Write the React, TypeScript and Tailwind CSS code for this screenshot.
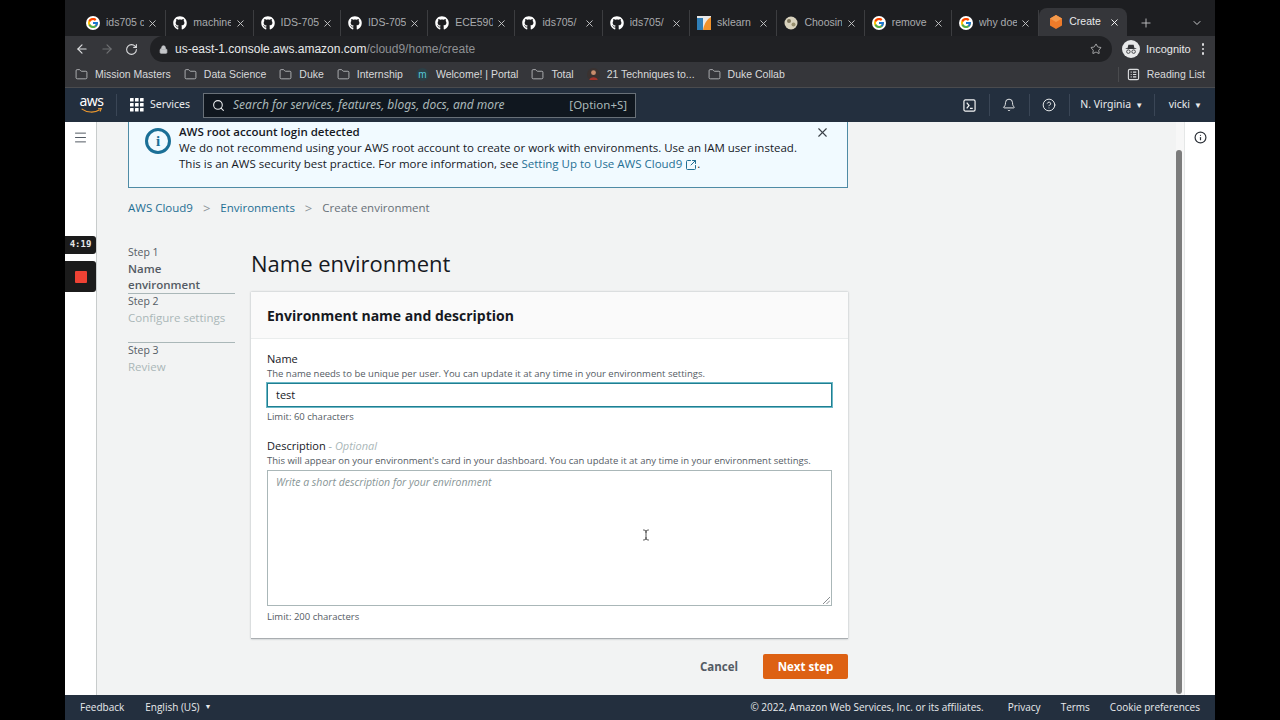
import { ArrowLeft, ArrowRight, Bell, ChevronDown, CircleHelp, Folder, Info, Lock, Menu, Plus, RotateCw, Search, SquareArrowOutUpRight, Star, TextCursor, X } from 'lucide-react'
import { FaGithub } from 'react-icons/fa'
import { FcGoogle } from 'react-icons/fc'

type TabKind = 'google' | 'github' | 'sklearn' | 'choosing' | 'aws'

const tabs: { kind: TabKind; label: string }[] = [
  { kind: 'google', label: 'ids705 c' },
  { kind: 'github', label: 'machine' },
  { kind: 'github', label: 'IDS-705' },
  { kind: 'github', label: 'IDS-705' },
  { kind: 'github', label: 'ECE590' },
  { kind: 'github', label: 'ids705/' },
  { kind: 'github', label: 'ids705/' },
  { kind: 'sklearn', label: 'sklearn' },
  { kind: 'choosing', label: 'Choosin' },
  { kind: 'google', label: 'remove' },
  { kind: 'google', label: 'why doe' },
]

const bookmarks = ['Mission Masters', 'Data Science', 'Duke', 'Internship']

function Favicon({ kind }: { kind: TabKind }) {
  if (kind === 'google') {
    return (
      <span className="flex h-[14px] w-[14px] shrink-0 items-center justify-center rounded-full bg-white">
        <FcGoogle className="h-3 w-3" />
      </span>
    )
  }
  if (kind === 'github') return <FaGithub className="h-[14px] w-[14px] shrink-0 text-white" />
  if (kind === 'sklearn') {
    return (
      <svg viewBox="0 0 14 14" className="h-[14px] w-[14px] shrink-0">
        <rect width="14" height="14" fill="#e8e8e8" />
        <path d="M0 2h6v12H0z" fill="#2f7fb8" />
        <path d="M14 1C10 3 7 8 6 14h8z" fill="#f0922b" />
      </svg>
    )
  }
  if (kind === 'choosing') {
    return (
      <svg viewBox="0 0 14 14" className="h-[14px] w-[14px] shrink-0">
        <circle cx="7" cy="7" r="6.5" fill="#d8d2bd" />
        <circle cx="5" cy="5" r="2" fill="#7d745a" />
        <circle cx="9.5" cy="8.5" r="2" fill="#98906f" />
      </svg>
    )
  }
  return (
    <svg viewBox="0 0 14 14" className="h-[14px] w-[14px] shrink-0">
      <path d="M7 0l6 3.5v7L7 14l-6-3.5v-7z" fill="#ee7b2a" />
      <path d="M7 0l6 3.5L7 7 1 3.5z" fill="#f59a4c" />
    </svg>
  )
}

function Tab({ kind, label, last }: { kind: TabKind; label: string; last: boolean }) {
  return (
    <div className="flex h-[26px] w-[87.3px] shrink-0 items-center border-r border-[#3c3d40] pl-[7px] pr-[7px]">
      <Favicon kind={kind} />
      <span className={`ml-[6px] w-[38px] overflow-hidden whitespace-nowrap text-[10.5px] text-[#a9abae] ${last ? '' : ''}`}>{label}</span>
      <X className="ml-auto h-[11px] w-[11px] text-[#c9cacc]" strokeWidth={2} />
    </div>
  )
}

function Bookmark({ label }: { label: string }) {
  return (
    <div className="flex items-center gap-[7px]">
      <Folder className="h-[13px] w-[13px] text-[#c4c6c9]" strokeWidth={1.5} />
      <span className="text-[10.5px] text-[#d9dadc]">{label}</span>
    </div>
  )
}

function ChromeBar() {
  return (
    <div className="font-['Liberation_Sans',sans-serif]">
      <div className="flex h-[36px] items-end bg-[#1d1e21] pl-[14px]">
        {tabs.map((t, i) => (
          <Tab key={i} kind={t.kind} label={t.label} last={i === tabs.length - 1} />
        ))}
        <div className="flex h-[28px] w-[88px] shrink-0 items-center rounded-t-lg bg-[#35363a] pl-[10px] pr-[7px]">
          <Favicon kind="aws" />
          <span className="ml-[6px] w-[32px] overflow-hidden whitespace-nowrap text-[10.5px] text-[#e8e9ea]">Create</span>
          <X className="ml-auto h-[11px] w-[11px] text-white" strokeWidth={2} />
        </div>
        <div className="flex h-[26px] items-center pl-[12px]">
          <Plus className="h-[14px] w-[14px] text-[#c9cacc]" strokeWidth={1.5} />
        </div>
        <div className="ml-auto flex h-[26px] items-center pr-[12px]">
          <ChevronDown className="h-[12px] w-[12px] text-[#c9cacc]" />
        </div>
      </div>
      <div className="flex h-[26px] items-center bg-[#35363a] pl-[10px] pr-[11px]">
        <ArrowLeft className="h-[14px] w-[14px] text-[#dcdddf]" strokeWidth={2} />
        <ArrowRight className="ml-[11px] h-[14px] w-[14px] text-[#6f7073]" strokeWidth={2} />
        <RotateCw className="ml-[11px] h-[13px] w-[13px] text-[#dcdddf]" strokeWidth={2} />
        <div className="ml-[12px] flex h-[26px] w-[962px] items-center rounded-full bg-[#202124] pl-[9px] pr-[10px]">
          <Lock className="h-[9px] w-[9px] fill-[#c4c6c9] text-[#c4c6c9]" />
          <span className="ml-[7px] text-[12px] text-[#e8e9ea]">
            us-east-1.console.aws.amazon.com<span className="text-[#8f9194]">/cloud9/home/create</span>
          </span>
          <Star className="ml-auto h-[12px] w-[12px] text-[#d0d1d3]" strokeWidth={1.5} />
        </div>
        <div className="ml-[10px] flex h-[22px] items-center">
          <span className="flex h-[18px] w-[18px] items-center justify-center rounded-full bg-[#e8e9ea]">
            <svg viewBox="0 0 16 16" className="h-[14px] w-[14px]">
              <path d="M5 3h6l1 4H4z M2 7h12v1H2z" fill="#35363a" />
              <circle cx="5" cy="11" r="2" fill="none" stroke="#35363a" strokeWidth="1" />
              <circle cx="11" cy="11" r="2" fill="none" stroke="#35363a" strokeWidth="1" />
            </svg>
          </span>
          <span className="ml-[6px] text-[11px] text-[#e8e9ea]">Incognito</span>
        </div>
        <div className="ml-auto flex flex-col gap-[2px]">
          <span className="h-[2.5px] w-[2.5px] rounded-full bg-[#dcdddf]" />
          <span className="h-[2.5px] w-[2.5px] rounded-full bg-[#dcdddf]" />
          <span className="h-[2.5px] w-[2.5px] rounded-full bg-[#dcdddf]" />
        </div>
      </div>
      <div className="flex h-[26px] items-center gap-[13px] border-b border-[#4a4b4e] bg-[#35363a] pl-[10px] pr-[10px]">
        {bookmarks.map(b => (
          <Bookmark key={b} label={b} />
        ))}
        <div className="flex items-center gap-[7px]">
          <span className="flex h-[13px] w-[13px] items-center justify-center rounded-full bg-[#2b3f46] text-[10px] leading-none text-[#56c5d8]">m</span>
          <span className="text-[10.5px] text-[#d9dadc]">Welcome! | Portal</span>
        </div>
        <Bookmark label="Total" />
        <div className="flex items-center gap-[7px]">
          <svg viewBox="0 0 14 14" className="h-[13px] w-[13px]">
            <circle cx="7" cy="7" r="7" fill="#3a3230" />
            <circle cx="7" cy="5" r="2.6" fill="#c98d6c" />
            <path d="M2.5 13c.5-4 8.5-4 9 0z" fill="#a3342b" />
          </svg>
          <span className="text-[10.5px] text-[#d9dadc]">21 Techniques to...</span>
        </div>
        <Bookmark label="Duke Collab" />
        <div className="ml-auto flex items-center gap-[7px] border-l border-[#4a4b4e] pl-[8px]">
          <svg viewBox="0 0 14 14" className="h-[13px] w-[13px] text-[#dcdddf]" fill="none" stroke="currentColor" strokeWidth="1.2">
            <rect x="1.5" y="1.5" width="11" height="11" rx="1.5" />
            <path d="M4 4.5h1M4 7h1M4 9.5h1M6.5 4.5H10M6.5 7H10M6.5 9.5H10" />
          </svg>
          <span className="text-[10.5px] text-[#d9dadc]">Reading List</span>
        </div>
      </div>
    </div>
  )
}

function AwsNav() {
  return (
    <div className="flex h-[34px] items-center bg-[#232f3e] pl-[14px] pr-[13px] text-[10.5px] text-[#e9ebed]">
      <div className="relative flex h-[24px] w-[25px] flex-col items-center">
        <span className="text-[14px] leading-[15px] tracking-[-0.5px] text-white">aws</span>
        <svg viewBox="0 0 25 7" className="h-[6px] w-[25px]">
          <path d="M1 1c6 4.500 15 5 21 1" fill="none" stroke="#f29b2e" strokeWidth="1.4" />
          <path d="M20 1l4-.500-1.500 3.500" fill="none" stroke="#f29b2e" strokeWidth="1.2" />
        </svg>
      </div>
      <div className="ml-[12px] mr-[13px] h-[22px] w-px bg-[#3a4656]" />
      <svg viewBox="0 0 14 14" className="h-[14px] w-[14px] fill-white">
        {[0, 5, 10].flatMap(y => [0, 5, 10].map(x => <rect key={`${x}-${y}`} x={x} y={y} width="3.6" height="3.6" rx="0.5" />))}
      </svg>
      <span className="ml-[6px]">Services</span>
      <div className="ml-[13px] flex h-[25px] w-[433px] items-center border border-[#687078] bg-[#10171f] pl-[8px] pr-[8px]">
        <Search className="h-[13px] w-[13px] text-[#e9ebed]" strokeWidth={2} />
        <span className="ml-[8px] text-[12px] italic text-[#aab7b8]">Search for services, features, blogs, docs, and more</span>
        <span className="ml-auto text-[11.5px] text-[#aab7b8]">[Option+S]</span>
      </div>
      <div className="ml-auto flex items-center">
        <span className="flex h-[22px] w-[40px] items-center justify-center border-r border-[#3a4656]">
          <svg viewBox="0 0 14 14" className="h-[13px] w-[13px]" fill="none" stroke="#f2f3f3" strokeWidth="1.3">
            <rect x="1" y="1" width="12" height="12" rx="1.500" />
            <path d="M4 4l2.500 3L4 10M7.500 10H10.500" />
          </svg>
        </span>
        <span className="flex h-[22px] w-[40px] items-center justify-center border-r border-[#3a4656]">
          <Bell className="h-[14px] w-[14px] text-[#f2f3f3]" strokeWidth={1.6} />
        </span>
        <span className="flex h-[22px] w-[40px] items-center justify-center border-r border-[#3a4656]">
          <CircleHelp className="h-[14px] w-[14px] text-[#f2f3f3]" strokeWidth={1.6} />
        </span>
        <span className="flex h-[22px] w-[85px] items-center justify-center gap-[4px] border-r border-[#3a4656]">
          N. Virginia <span className="text-[8px]">▼</span>
        </span>
        <span className="flex h-[22px] items-center gap-[4px] pl-[14px]">
          vicki <span className="text-[8px]">▼</span>
        </span>
      </div>
    </div>
  )
}

function Step({ n, label, active, line }: { n: number; label: string; active?: boolean; line?: boolean }) {
  return (
    <div className={line ? 'h-[49px] border-b border-[#aab7b8]' : 'h-[49px]'}>
      <div className="text-[10.5px] leading-[14px] text-[#545b64]">Step {n}</div>
      <div className={active ? 'mt-[2px] text-[11.5px] font-semibold leading-[16px] text-[#545b64]' : 'mt-[2px] text-[11.5px] leading-[16px] text-[#aab7b8]'}>{label}</div>
    </div>
  )
}

function Form() {
  return (
    <div className="border-b border-[#a9adb0] bg-white shadow-[0_0_2px_rgba(0,28,36,0.3)]">
      <div className="flex h-[47px] items-center border-b border-[#eaeded] bg-[#fafafa] px-4">
        <h2 className="text-[14px] font-bold text-[#16191f]">Environment name and description</h2>
      </div>
      <div className="px-4 pb-[15px] pt-[13px]">
        <div className="text-[11px] leading-[14px] text-[#16191f]">Name</div>
        <div className="mt-[1px] text-[9.5px] leading-[13px] text-[#545b64]">The name needs to be unique per user. You can update it at any time in your environment settings.</div>
        <div className="mt-[3px] flex h-[24px] items-center border border-[#1f7f92] pl-2 text-[11px] text-[#16191f] ring-1 ring-[#6db8c6]">test</div>
        <div className="mt-[3px] text-[9.5px] leading-[13px] text-[#545b64]">Limit: 60 characters</div>
        <div className="mt-[16px] text-[11px] leading-[14px] text-[#16191f]">
          Description <span className="italic text-[#aab7b8]">- Optional</span>
        </div>
        <div className="mt-[1px] text-[9.5px] leading-[13px] text-[#545b64]">This will appear on your environment's card in your dashboard. You can update it at any time in your environment settings.</div>
        <div className="relative mt-[3px] h-[136px] border border-[#aab7b8] pl-2 pt-[4px] text-[10.5px] italic text-[#879596]">
          Write a short description for your environment
          <svg viewBox="0 0 8 8" className="absolute bottom-px right-px h-2 w-2" fill="none" stroke="#6b7074" strokeWidth="0.8">
            <path d="M1 8l7-7M4.500 8l3.500-3.500" />
          </svg>
          <TextCursor className="absolute left-[372px] top-[56px] h-[16px] w-[12px] text-[#222]" strokeWidth={1.5} />
        </div>
        <div className="mt-[4px] text-[9.5px] leading-[13px] text-[#545b64]">Limit: 200 characters</div>
      </div>
    </div>
  )
}

function Main() {
  return (
    <div className="relative flex h-[573px] font-['Open_Sans',sans-serif]">
      <div className="flex w-[32px] shrink-0 justify-center border-r border-[#c8cccc] bg-white pt-[8px]">
        <Menu className="h-[15px] w-[15px] text-[#545b64]" strokeWidth={1.6} />
      </div>
      <div className="flex-1 overflow-hidden bg-[#f2f3f3] pl-[31px]">
        <div className="relative h-[66px] w-[720px] border border-t-0 border-[#4f8ba5] bg-[#f1faff] pl-[50px] pr-[36px] pt-[2px] text-[11.5px] leading-[16px] text-[#16191f]">
          <span className="absolute left-[16px] top-[6px] flex h-[26px] w-[26px] items-center justify-center rounded-full border-[3px] border-[#1b6f96] font-['Liberation_Serif',serif] text-[15px] font-bold leading-none text-[#1b6f96]">i</span>
          <div className="font-semibold">AWS root account login detected</div>
          <div>
            We do not recommend using your AWS root account to create or work with environments. Use an IAM user instead. This is an AWS security best practice. For more information, see{' '}
            <span className="text-[#1f6f94]">
              Setting Up to Use AWS Cloud9 <SquareArrowOutUpRight className="inline h-[12px] w-[12px]" />
            </span>
            .
          </div>
          <X className="absolute right-[17px] top-[3px] h-[15px] w-[15px] text-[#3a4047]" strokeWidth={1.8} />
        </div>
        <div className="mt-[12px] flex items-center text-[11.5px] leading-[16px]">
          <span className="text-[#1f6f94]">AWS Cloud9</span>
          <span className="mx-[10px] text-[13px] text-[#8d9599]">&gt;</span>
          <span className="text-[#1f6f94]">Environments</span>
          <span className="mx-[10px] text-[13px] text-[#8d9599]">&gt;</span>
          <span className="text-[#687078]">Create environment</span>
        </div>
        <div className="mt-[29px] flex w-[720px] gap-4">
          <div className="w-[107px] shrink-0">
            <Step n={1} label="Name environment" active line />
            <Step n={2} label="Configure settings" line />
            <Step n={3} label="Review" />
          </div>
          <div className="flex-1">
            <h1 className="text-[22px] font-normal leading-[36px] text-[#16191f]">Name environment</h1>
            <div className="mt-[11px]">
              <Form />
            </div>
            <div className="mt-[15px] flex items-center justify-end">
              <span className="mr-[25px] text-[11.5px] font-bold text-[#545b64]">Cancel</span>
              <span className="flex h-[25px] w-[85px] items-center justify-center rounded-[2px] bg-[#dd6113] text-[11.5px] font-bold text-white">Next step</span>
            </div>
          </div>
        </div>
      </div>
      <div className="w-[8px] shrink-0 bg-[#f7f7f7] pt-[28px]">
        <div className="h-[544px] w-[6px] rounded-full bg-[#7c7c7c]" />
      </div>
      <div className="flex w-[31px] shrink-0 justify-center border-l border-[#e5e7e7] bg-white pt-[9px]">
        <Info className="h-[13px] w-[13px] text-[#2c3138]" strokeWidth={2.2} />
      </div>
      <div className="absolute -left-0 top-[114px] flex h-[18px] w-[31px] items-center justify-center rounded-r-[3px] bg-[#1b1b1b] font-['DejaVu_Sans_Mono',monospace] text-[9px] font-bold text-[#e6e6e6]">4:19</div>
      <div className="absolute left-0 top-[139px] flex h-[31px] w-[31px] items-center justify-center rounded-r-[3px] bg-[#1b1b1b]">
        <span className="h-[12px] w-[12px] rounded-[1px] bg-[#ef4234]" />
      </div>
    </div>
  )
}

function Footer() {
  return (
    <div className="flex h-[25px] items-center bg-[#232f3e] pl-[15px] pr-[15px] font-['Open_Sans',sans-serif] text-[10px] text-[#e9ebed]">
      <span>Feedback</span>
      <span className="ml-[21px]">English (US)</span>
      <span className="ml-[5px] text-[7px]">▼</span>
      <span className="ml-auto">© 2022, Amazon Web Services, Inc. or its affiliates.</span>
      <span className="ml-[24px]">Privacy</span>
      <span className="ml-[20px]">Terms</span>
      <span className="ml-[20px]">Cookie preferences</span>
    </div>
  )
}

export default function App() {
  return (
    <div className="flex h-[720px] w-[1280px] justify-center overflow-hidden bg-black">
      <div className="h-[720px] w-[1150px]">
        <ChromeBar />
        <AwsNav />
        <Main />
        <Footer />
      </div>
    </div>
  )
}
